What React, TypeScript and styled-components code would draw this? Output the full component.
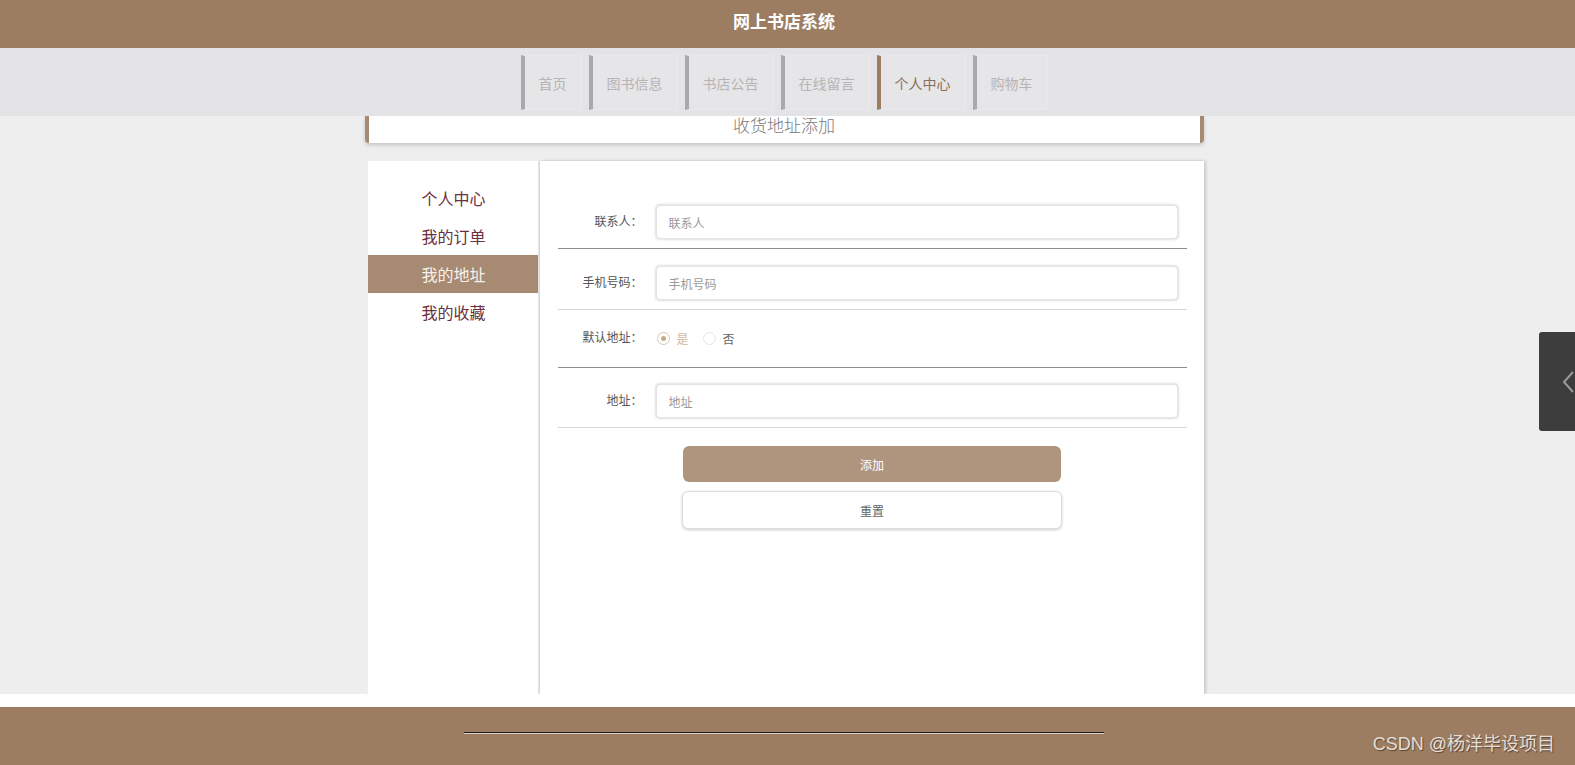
import React, { useState } from "react";
import styled, { createGlobalStyle } from "styled-components";

const GlobalStyle = createGlobalStyle`
  html, body {
    margin: 0;
    padding: 0;
    background: #efeeef;
    font-family: "Noto Sans CJK SC", "Noto Sans", sans-serif;
    overflow: hidden;
  }
  * { box-sizing: border-box; }
`;

const Page = styled.div`
  width: 100%;
  height: 765px;
  display: flex;
  flex-direction: column;
`;

const Header = styled.header`
  height: 48px;
  flex-shrink: 0;
  background: #9c7d61;
  display: flex;
  justify-content: center;
  align-items: center;
  padding: 0 7px 8px 0;
  color: #fff;
  font-size: 17px;
  font-weight: 700;
  box-shadow: 0 1px 3px rgba(0, 0, 0, 0.15);
  position: relative;
  z-index: 2;
`;

const NavBar = styled.nav`
  height: 68px;
  flex-shrink: 0;
  background: #e4e3e5;
  display: flex;
  justify-content: center;
  align-items: flex-start;
  padding: 7px 7px 0 0;
  gap: 7px;
  position: relative;
  z-index: 2;
`;

const NavItem = styled.a<{ $active?: boolean }>`
  height: 55px;
  display: flex;
  align-items: center;
  padding: 0 14px 0 14px;
  border-left: 4px solid ${(p) => (p.$active ? "#9c7d61" : "#a9a8aa")};
  border-right: 1px solid #e9e8ea;
  border-top: 1px solid #e9e8ea;
  border-bottom: 1px solid #e9e8ea;
  background: #e6e5e7;
  color: ${(p) => (p.$active ? "#8a7058" : "#b6b4b6")};
  font-size: 14px;
  cursor: pointer;
`;

const Body = styled.div`
  display: flex;
  justify-content: center;
  padding-right: 7px;
`;

const Wrap = styled.div`
  width: 839px;
  display: flex;
  flex-direction: column;
`;

const TitleBox = styled.div`
  height: 27px;
  background: #fff;
  border-left: 4px solid #a68a72;
  border-right: 4px solid #a68a72;
  border-radius: 0 0 4px 4px;
  box-shadow: 0 2px 4px rgba(0, 0, 0, 0.18);
  text-align: center;
  color: #7a7a7a;
  font-size: 17px;
  font-weight: 300;
  line-height: 17px;
`;

const Main = styled.div`
  margin-top: 18px;
  height: 533px;
  display: flex;
  gap: 2px;
  padding-left: 2px;
`;

const Sidebar = styled.aside`
  width: 171px;
  background: #fff;
  border-left: 1px dotted #e2e2e2;
  padding-top: 18px;
  display: flex;
  flex-direction: column;
`;

const SideItem = styled.div<{ $active?: boolean }>`
  height: 38px;
  display: flex;
  align-items: center;
  padding-left: 54px;
  font-size: 16px;
  background: ${(p) => (p.$active ? "#a78a72" : "transparent")};
  color: ${(p) => (p.$active ? "#f7f1ea" : "#6a3042")};
  cursor: pointer;
`;

const Content = styled.section`
  flex: 1;
  background: #fff;
  box-shadow: -1px 0 2px rgba(0, 0, 0, 0.12), 2px 0 3px rgba(0, 0, 0, 0.15);
  padding: 27px 17px 0 18px;
  display: flex;
  flex-direction: column;
`;

const Row = styled.div<{ $dark?: boolean; $top?: number; $bottom?: number }>`
  display: flex;
  align-items: center;
  padding: ${(p) => p.$top ?? 17}px 9px ${(p) => p.$bottom ?? 9}px 0;
  border-bottom: 1px solid ${(p) => (p.$dark ? "#8e8e8e" : "#d6d6d6")};
`;

const Label = styled.label`
  width: 85px;
  text-align: right;
  font-size: 12px;
  color: #555;
  margin-right: 13px;
  margin-top: -4px;
`;

const Input = styled.input`
  flex: 1;
  height: 34px;
  border: 1px solid #e4e4e4;
  border-radius: 4px;
  box-shadow: 0 0 3px rgba(0, 0, 0, 0.25);
  padding: 0 12px;
  font-size: 12px;
  font-family: inherit;
  color: #555;
  outline: none;
  &::placeholder {
    color: #999;
  }
`;

const RadioGroup = styled.div`
  height: 34px;
  display: flex;
  align-items: center;
  gap: 14px;
  padding-left: 1px;
`;

const RadioOpt = styled.span<{ $checked?: boolean }>`
  display: flex;
  align-items: center;
  gap: 7px;
  font-size: 12px;
  color: ${(p) => (p.$checked ? "#d3b79f" : "#666")};
  cursor: pointer;
`;

const Dot = styled.span<{ $checked?: boolean }>`
  width: 13px;
  height: 13px;
  border-radius: 50%;
  border: 1px solid ${(p) => (p.$checked ? "#d8c4b2" : "#e6e6e6")};
  display: flex;
  align-items: center;
  justify-content: center;
  &::after {
    content: "";
    width: 5px;
    height: 5px;
    border-radius: 50%;
    background: ${(p) => (p.$checked ? "#c7a88c" : "transparent")};
  }
`;

const Buttons = styled.div`
  margin-top: 18px;
  display: flex;
  flex-direction: column;
  align-items: center;
  gap: 9px;
`;

const Btn = styled.button<{ $primary?: boolean }>`
  width: ${(p) => (p.$primary ? 378 : 380)}px;
  height: ${(p) => (p.$primary ? 36 : 38)}px;
  border-radius: 6px;
  font-family: inherit;
  font-size: 12px;
  cursor: pointer;
  border: ${(p) => (p.$primary ? "none" : "1px solid #e2dcd6")};
  background: ${(p) => (p.$primary ? "#b0957e" : "#fff")};
  color: ${(p) => (p.$primary ? "#fff" : "#666")};
  box-shadow: ${(p) => (p.$primary ? "none" : "0 1px 3px rgba(0,0,0,0.2)")};
`;

const WhiteStrip = styled.div`
  height: 13px;
  flex-shrink: 0;
  background: #fff;
`;

const Footer = styled.footer`
  height: 58px;
  flex-shrink: 0;
  background: #9c7d61;
  padding: 25px 7px 0 0;
  display: flex;
  justify-content: center;
  position: relative;
`;

const FooterLine = styled.div`
  width: 640px;
  height: 2px;
  border-top: 1px solid #1e1a17;
  border-bottom: 1px solid #d9cfc5;
`;

const Watermark = styled.div`
  position: absolute;
  right: 20px;
  bottom: 10px;
  color: #e6ded6;
  font-size: 18px;
  font-family: "Liberation Sans", "Noto Sans CJK SC", sans-serif;
  text-shadow: 1px 1px 1px rgba(0, 0, 0, 0.45);
`;

const SideTab = styled.div`
  position: fixed;
  right: 0;
  top: 332px;
  width: 36px;
  height: 99px;
  background: #3d3d3d;
  border-radius: 3px 0 0 3px;
  display: flex;
  align-items: center;
  justify-content: flex-end;
`;

const navs = ["首页", "图书信息", "书店公告", "在线留言", "个人中心", "购物车"];
const menu = ["个人中心", "我的订单", "我的地址", "我的收藏"];

export default function App() {
  const [isDefault, setIsDefault] = useState(true);

  return (
    <Page>
      <GlobalStyle />
      <Header>网上书店系统</Header>
      <NavBar>
        {navs.map((n) => (
          <NavItem key={n} $active={n === "个人中心"}>
            {n}
          </NavItem>
        ))}
      </NavBar>
      <Body>
        <Wrap>
          <TitleBox>收货地址添加</TitleBox>
          <Main>
            <Sidebar>
              {menu.map((m) => (
                <SideItem key={m} $active={m === "我的地址"}>
                  {m}
                </SideItem>
              ))}
            </Sidebar>
            <Content>
              <Row $dark>
                <Label>联系人：</Label>
                <Input placeholder="联系人" />
              </Row>
              <Row>
                <Label>手机号码：</Label>
                <Input placeholder="手机号码" />
              </Row>
              <Row $dark $top={11} $bottom={12}>
                <Label>默认地址：</Label>
                <RadioGroup>
                  <RadioOpt $checked={isDefault} onClick={() => setIsDefault(true)}>
                    <Dot $checked={isDefault} />是
                  </RadioOpt>
                  <RadioOpt $checked={!isDefault} onClick={() => setIsDefault(false)}>
                    <Dot $checked={!isDefault} />否
                  </RadioOpt>
                </RadioGroup>
              </Row>
              <Row $top={16} $bottom={9}>
                <Label>地址：</Label>
                <Input placeholder="地址" />
              </Row>
              <Buttons>
                <Btn $primary>添加</Btn>
                <Btn>重置</Btn>
              </Buttons>
            </Content>
          </Main>
        </Wrap>
      </Body>
      <WhiteStrip />
      <Footer>
        <FooterLine />
        <Watermark>CSDN @杨洋毕设项目</Watermark>
      </Footer>
      <SideTab>
        <svg width="14" height="26" viewBox="0 0 14 26">
          <path d="M12 3 L3 13 L12 23" stroke="#9a9a9a" strokeWidth="2" fill="none" />
        </svg>
      </SideTab>
    </Page>
  );
}
